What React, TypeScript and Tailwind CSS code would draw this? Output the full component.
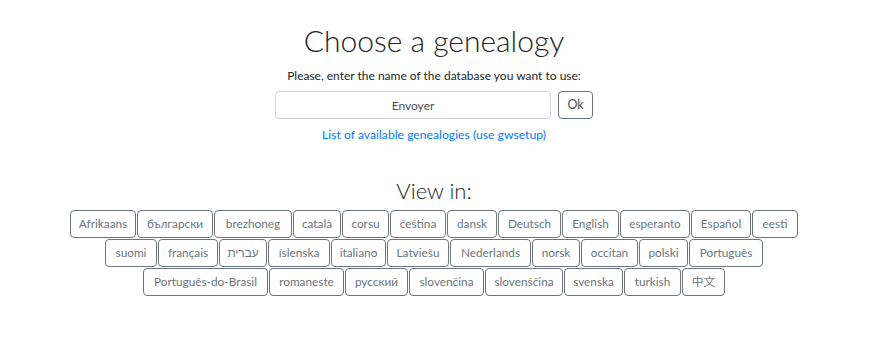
import React from 'react';

const rows: [string, number][][] = [
  [
    ['Afrikaans', 66], ['български', 76], ['brezhoneg', 78], ['català', 48], ['corsu', 47], ['čeština', 56],
    ['dansk', 50], ['Deutsch', 63], ['English', 57], ['esperanto', 70], ['Español', 60], ['eesti', 46],
  ],
  [
    ['suomi', 52], ['français', 60], ['עברית', 48], ['íslenska', 62], ['italiano', 55], ['Latviešu', 62],
    ['Nederlands', 81], ['norsk', 48], ['occitan', 57], ['polski', 49], ['Português', 74],
  ],
  [
    ['Português-do-Brasil', 125], ['romaneste', 75], ['русский', 63], ['slovenčina', 75], ['slovenščina', 78],
    ['svenska', 59], ['turkish', 57], ['中文', 43],
  ],
];

export default function App() {
  return (
    <div
      className="w-[868px] min-h-[344px] bg-white text-[#212529] flex flex-col items-center"
      style={{ fontFamily: 'Lato, "Noto Sans CJK SC", sans-serif' }}
    >
      <h1 className="mt-[19px] h-[42px] leading-[42px] text-[30px] font-light">Choose a genealogy</h1>
      <p className="mt-[6px] text-[12px] leading-[18px]">Please, enter the name of the database you want to use:</p>
      <div className="mt-[6px] flex gap-[7px]">
        <input
          className="w-[276px] h-[28px] rounded-[4px] border border-[#ced4da] text-center text-[12px] text-[#495057] outline-none"
          defaultValue="Envoyer"
        />
        <button className="w-[35px] h-[28px] rounded-[4px] border border-[#6c757d] text-[12.5px] text-[#495057]">Ok</button>
      </div>
      <a href="#" className="mt-[7px] text-[12.2px] leading-[18px] text-[#007bff]">
        List of available genealogies (use gwsetup)
      </a>
      <h2 className="mt-[33px] text-[22px] leading-[28px] font-light">View in:</h2>
      <div className="mt-[5px] flex flex-col items-center gap-px">
        {rows.map((row, i) => (
          <div key={i} className="flex gap-px">
            {row.map(([name, w]) => (
              <button
                key={name}
                className="h-[28px] rounded-[4px] border border-[#6c757d] text-[11.8px] text-[#6c757d] whitespace-nowrap flex items-center justify-center"
                style={{ width: w }}
              >
                {name}
              </button>
            ))}
          </div>
        ))}
      </div>
    </div>
  );
}
